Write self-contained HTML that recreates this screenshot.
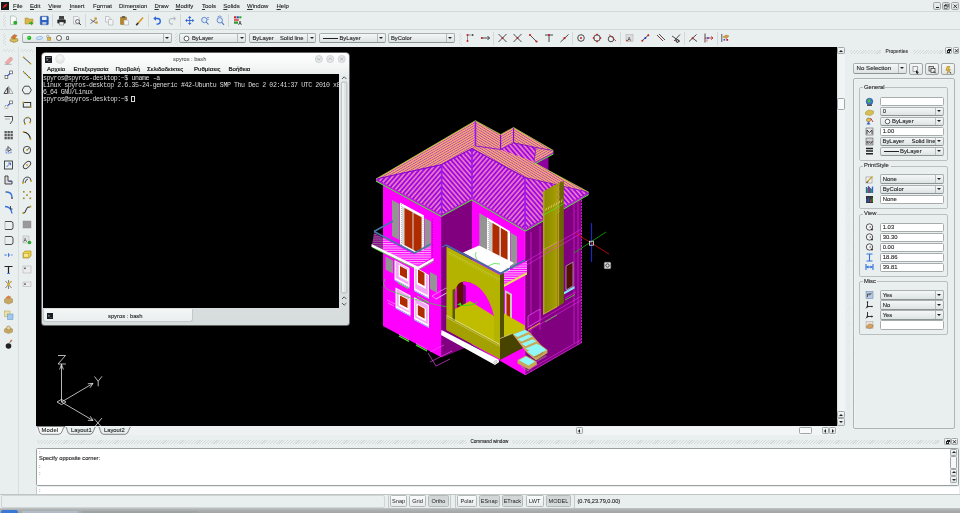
<!DOCTYPE html>
<html><head><meta charset="utf-8">
<style>
*{box-sizing:border-box;margin:0;padding:0}
html,body{width:960px;height:513px;overflow:hidden;background:#e9eeee;font-family:"Liberation Sans",sans-serif;color:#222}
.a{position:absolute}
.t{position:absolute;white-space:nowrap;font-size:6px;line-height:8px;color:#1c1c1c;-webkit-text-stroke:.12px #333}
u{text-decoration-thickness:.5px;text-underline-offset:.6px}
.mono{font-family:"Liberation Mono",monospace}
.cb .t{font-size:5.8px}
.cb{position:absolute;border:1px solid #aab0b0;border-bottom-color:#8e9494;border-radius:2px;background:linear-gradient(#f4f7f7,#dde3e3);height:10px}
.cb i{position:absolute;right:0;top:0;bottom:0;width:7.6px;border-left:.8px solid #b4baba}
.cb i:after{content:"";position:absolute;left:1.3px;top:calc(50% - 1.2px);border:2.1px solid transparent;border-top:2.8px solid #222;border-bottom:none}
.in{position:absolute;border:1px solid #a6acac;border-radius:1.5px;background:#fff;height:9.6px}
.gb{position:absolute;border:1px solid #b9bfbf;border-radius:2px}
.btn{position:absolute;border:.8px solid #a0a6a6;border-radius:1.3px;background:linear-gradient(#f6f8f8,#dfe4e4)}
.hatch{position:absolute;background:repeating-linear-gradient(135deg,#e9eeee 0 1.2px,#d3d9d9 1.2px 2px)}
</style></head><body><div id="wrap" style="position:absolute;left:0;top:0;width:960px;height:513px;will-change:transform;filter:brightness(1)">
<!-- MENUBAR -->
<div class="a" id="menubar" style="left:0;top:0;width:960px;height:12px;border-bottom:1px solid #d3d9d9">
<svg class="a" style="left:1px;top:2px" width="8" height="8" viewBox="0 0 8 8"><rect width="8" height="8" fill="#181818"/><path d="M1.5 6.5 L3 3 L6.5 1.5 L5 4.5 Z" fill="#e02020"/></svg>
<span class="t" style="left:13px;top:2px"><u>F</u>ile</span>
<span class="t" style="left:30px;top:2px"><u>E</u>dit</span>
<span class="t" style="left:48.3px;top:2px"><u>V</u>iew</span>
<span class="t" style="left:69.5px;top:2px"><u>I</u>nsert</span>
<span class="t" style="left:93px;top:2px">F<u>o</u>rmat</span>
<span class="t" style="left:119px;top:2px">Dime<u>n</u>sion</span>
<span class="t" style="left:154.5px;top:2px"><u>D</u>raw</span>
<span class="t" style="left:175.5px;top:2px"><u>M</u>odify</span>
<span class="t" style="left:202px;top:2px"><u>T</u>ools</span>
<span class="t" style="left:223.3px;top:2px"><u>S</u>olids</span>
<span class="t" style="left:247px;top:2px"><u>W</u>indow</span>
<span class="t" style="left:276.5px;top:2px"><u>H</u>elp</span>
<div class="btn" style="left:933.2px;top:1.5px;width:8.2px;height:8.2px;border-radius:1.8px;background:linear-gradient(#eaeeee,#d9dfdf)"><div class="a" style="left:1.8px;top:4px;width:3.4px;height:1.1px;background:#222"></div></div>
<div class="btn" style="left:942px;top:1.5px;width:8px;height:8.2px;border-radius:1.8px;background:linear-gradient(#dfe4e4,#d4dada)"><svg class="a" style="left:0;top:0" width="6.4" height="6.6" viewBox="0 0 6.4 6.6"><rect x="2.5" y="1.2" width="2.9" height="2.7" fill="#e4e8e8" stroke="#222" stroke-width=".5"/><rect x="1.2" y="2.6" width="2.9" height="2.7" fill="#e4e8e8" stroke="#222" stroke-width=".5"/><path d="M1.2 2.9 h2.9" stroke="#222" stroke-width=".8"/></svg></div>
<div class="btn" style="left:950.6px;top:1.5px;width:8.2px;height:8.2px;border-radius:1.8px;background:linear-gradient(#eaeeee,#d9dfdf)"><svg class="a" style="left:0;top:0" width="6.6" height="6.6" viewBox="0 0 6.6 6.6"><path d="M1.6 1.6L5 5M5 1.6L1.6 5" stroke="#222" stroke-width=".9"/></svg></div>
</div>
<!-- TOOLBAR1 -->
<div class="a" id="tb1" style="left:0;top:12px;width:960px;height:18px;border-bottom:1px solid #d3d9d9">
<div class="hatch" style="left:3px;top:3px;width:3px;height:12px"></div>
<svg class="a" style="left:0;top:0" width="260" height="18" viewBox="0 12 260 18">
<!-- new -->
<path d="M10.5 16 h4 l2 2 v6.5 h-6z" fill="#fafafa" stroke="#9aa" stroke-width=".6"/><circle cx="15.3" cy="22.8" r="2" fill="#2cae2c"/>
<!-- open -->
<path d="M25 18 h3 l1 1 h4 v5 h-8z" fill="#d9b44a" stroke="#a98a30" stroke-width=".5"/><path d="M29 22.5 h2 v-1.4 l2.2 2.2 l-2.2 2.2 v-1.4 h-2z" fill="#2cae2c"/>
<!-- save -->
<rect x="40.3" y="16.3" width="8" height="8.4" rx=".8" fill="#2a62c4" stroke="#1b4796" stroke-width=".5"/><rect x="42" y="16.8" width="4.6" height="3.2" fill="#e8eef8"/><rect x="42.3" y="22" width="4" height="2.6" fill="#b9c6dc"/>
<line x1="52.5" y1="14" x2="52.5" y2="27" stroke="#cdd3d3" stroke-width=".8"/>
<!-- print -->
<rect x="57.3" y="19.5" width="8.4" height="4" rx="1" fill="#2a2a2a"/><rect x="59" y="16" width="5" height="3.6" fill="#444"/><rect x="59.2" y="22" width="4.6" height="3" fill="#f4f4f4" stroke="#555" stroke-width=".4"/>
<!-- preview -->
<path d="M73.5 16.5 h4.5 l1.5 1.5 v6 h-6z" fill="#f2f2f2" stroke="#99a" stroke-width=".5"/><circle cx="77.5" cy="21.5" r="2" fill="#e8ecf2" stroke="#444" stroke-width=".7"/><line x1="79" y1="23" x2="80.8" y2="25" stroke="#333" stroke-width="1"/>
<line x1="85.5" y1="14" x2="85.5" y2="27" stroke="#cdd3d3" stroke-width=".8"/>
<!-- cut -->
<path d="M90.5 23.5 L97 18.5 M90.5 19.5 L96 23" stroke="#555" stroke-width=".8"/><circle cx="95.6" cy="18.6" r="1.3" fill="#c9a03a"/><circle cx="96.6" cy="22.6" r="1.3" fill="#c9a03a"/>
<!-- copy -->
<path d="M105.5 16.5 h3.5 l1 1 v4.5 h-4.5z" fill="#f4f4f4" stroke="#99a" stroke-width=".5"/><path d="M108.5 19.5 h3.5 l1 1 v4.5 h-4.5z" fill="#f4f4f4" stroke="#99a" stroke-width=".5"/>
<!-- paste -->
<rect x="120.5" y="17" width="6" height="7.5" rx=".6" fill="#b8862a" stroke="#8a6217" stroke-width=".5"/><rect x="122" y="16.2" width="3" height="1.6" fill="#555"/><path d="M124 20 h3.5 l1 1 v4 h-4.5z" fill="#f6f6f6" stroke="#99a" stroke-width=".5"/>
<!-- brush -->
<path d="M137 24.5 L143 17.5" stroke="#d89a28" stroke-width="1.6"/><path d="M136.2 25.3 L138.2 23" stroke="#333" stroke-width="1.6"/>
<line x1="148.5" y1="14" x2="148.5" y2="27" stroke="#cdd3d3" stroke-width=".8"/>
<!-- undo -->
<path d="M154.5 18.5 h3 a2.8 2.8 0 0 1 0 5.6 h-1" fill="none" stroke="#2a62d8" stroke-width="1.3"/><path d="M153.3 18.5 l2.6 -2.2 v4.4z" fill="#2a62d8"/>
<!-- redo -->
<path d="M175 18.5 h-3 a2.8 2.8 0 0 0 0 5.6 h1" fill="none" stroke="#b4bcc4" stroke-width="1.1"/><path d="M176.2 18.5 l-2.6 -2.2 v4.4z" fill="#b4bcc4"/>
<line x1="180.5" y1="14" x2="180.5" y2="27" stroke="#cdd3d3" stroke-width=".8"/>
<!-- pan -->
<path d="M189.7 17.3 v6.4 M186.5 20.5 h6.4" stroke="#2a62d8" stroke-width=".9"/><path d="M189.7 16 l1.7 1.9 h-3.4z M189.7 25 l1.7 -1.9 h-3.4z M185.2 20.5 l1.9 -1.7 v3.4z M194.2 20.5 l-1.9 -1.7 v3.4z" fill="#2a62d8"/>
<!-- zoom -->
<circle cx="204.3" cy="20" r="2.7" fill="#dfe9f6" stroke="#4a74c4" stroke-width=".8"/><line x1="206.3" y1="22" x2="208.5" y2="24.5" stroke="#4a74c4" stroke-width="1.1"/><path d="M207 17.5 h2 M207 19.3 h2" stroke="#4a74c4" stroke-width=".6"/>
<circle cx="219.8" cy="20.3" r="2.7" fill="#dfe9f6" stroke="#4a74c4" stroke-width=".8"/><line x1="221.8" y1="22.3" x2="224" y2="24.8" stroke="#4a74c4" stroke-width="1.1"/><path d="M217.5 17 a3.5 3.5 0 0 1 4 -.5" fill="none" stroke="#4a74c4" stroke-width=".7"/>
<line x1="228.5" y1="14" x2="228.5" y2="27" stroke="#cdd3d3" stroke-width=".8"/>
<!-- color grid -->
<rect x="234" y="16.3" width="2.2" height="2" fill="#d02020"/><rect x="236.6" y="16.3" width="2.2" height="2" fill="#2a4ad0"/><rect x="239.2" y="16.3" width="2.2" height="2" fill="#18b018"/><rect x="234" y="18.8" width="4.8" height="2.2" fill="#e06060"/><rect x="234" y="21.5" width="4" height="2.2" fill="#2a9a2a"/><text x="238.2" y="25" font-family="Liberation Sans" font-size="4.8" font-weight="bold" fill="#222">A</text>
</svg>
</div>
<!-- TOOLBAR2 -->
<div class="a" id="tb2" style="left:0;top:30px;width:960px;height:17px">
<div class="hatch" style="left:3px;top:3px;width:3px;height:12px"></div>
<svg class="a" style="left:9px;top:3px" width="10" height="10" viewBox="0 0 10 10"><path d="M1 6.5 l3.5 -2 l4.5 1.5 v2 l-4 1.5 l-4 -1.5z" fill="#c8a840" stroke="#8a7020" stroke-width=".4"/><path d="M2 4.5 l3 -3 l3 1 l-2.5 3z" fill="#d87838" stroke="#8a4a20" stroke-width=".4"/><path d="M1.5 6.8 l3.5 1 l3.8 -1.2" fill="none" stroke="#f0e0a0" stroke-width=".5"/></svg>
<div class="cb" style="left:21.5px;top:3px;width:150px">
 <svg class="a" style="left:0;top:0" width="60" height="8" viewBox="0 0 60 8"><circle cx="6.2" cy="3.9" r="2.1" fill="#1eb81e"/><circle cx="5.8" cy="3.4" r=".8" fill="#70e070"/><ellipse cx="16.5" cy="4" rx="3.3" ry="1.5" fill="#d4e6fa" stroke="#6aa0e0" stroke-width=".6" transform="rotate(-12 16.5 4)"/><rect x="24.6" y="3.4" width="3.2" height="2.8" fill="#e0b838" stroke="#8a6a18" stroke-width=".4"/><path d="M23.6 3.4 v-1 a1.2 1.2 0 0 1 2.4 0 v1" fill="none" stroke="#777" stroke-width=".6"/><circle cx="36" cy="4" r="2.5" fill="#fff" stroke="#222" stroke-width=".7"/></svg>
 <span class="t" style="left:43.5px;top:0px">0</span><i></i></div>
<div class="hatch" style="left:174.5px;top:3px;width:3px;height:12px"></div>
<div class="cb" style="left:179px;top:3px;width:67px"><svg class="a" style="left:3px;top:0.5px" width="7" height="7" viewBox="0 0 7 7"><circle cx="3.5" cy="3.5" r="2.4" fill="#fff" stroke="#222" stroke-width=".7"/></svg><span class="t" style="left:12px;top:0">ByLayer</span><i></i></div>
<div class="cb" style="left:249px;top:3px;width:67px"><span class="t" style="left:2.5px;top:0">ByLayer</span><span class="t" style="left:30px;top:0">Solid line</span><i></i></div>
<div class="cb" style="left:318.5px;top:3px;width:67px"><div class="a" style="left:3px;top:3.8px;width:15px;height:0.8px;background:#222"></div><span class="t" style="left:20px;top:0">ByLayer</span><i></i></div>
<div class="cb" style="left:387.5px;top:3px;width:67px"><span class="t" style="left:2.5px;top:0">ByColor</span><i></i></div>
<div class="hatch" style="left:459px;top:3px;width:3px;height:12px"></div>
<svg class="a" style="left:0;top:0" width="960" height="17" viewBox="0 30 960 17">
<g stroke="#222" stroke-width=".8" fill="none">
<!-- snap icon -->
<path d="M467.5 35 v6 M467.5 35 h5" stroke="#555" stroke-width=".6"/><circle cx="467.5" cy="35" r="1" fill="#c02020" stroke="none"/><circle cx="467.5" cy="41" r="1" fill="#c02020" stroke="none"/><rect x="472" y="34.3" width="1.4" height="1.4" fill="#222" stroke="none"/>
<!-- arrow -->
<path d="M481.5 38 h8 M487.5 36 l2 2 l-2 2" /><circle cx="481.8" cy="38" r="1" fill="#c02020" stroke="none"/>
<line x1="493.5" y1="32" x2="493.5" y2="45" stroke="#cdd3d3"/>
<!-- X intersections -->
<path d="M498.5 34 L506.5 42 M506.5 34 L498.5 42"/><circle cx="502.5" cy="38" r="1" fill="#c02020" stroke="none"/>
<path d="M513.5 34 L521.5 42 M521.5 34 L513.5 42"/><circle cx="517.5" cy="38" r="1" fill="#c02020" stroke="none"/>
<path d="M530 35 L536.5 41.5"/><circle cx="530" cy="35" r="1.1" fill="#c02020" stroke="none"/><circle cx="536.5" cy="41.5" r="1.1" fill="#c02020" stroke="none"/>
<path d="M545 35 h8 M549 35 v7"/><circle cx="549" cy="35" r="1" fill="#c02020" stroke="none"/>
<path d="M560.5 42 L568.5 34.5"/><circle cx="564.5" cy="38.2" r="1.1" fill="#c02020" stroke="none"/>
<line x1="572.5" y1="32" x2="572.5" y2="45" stroke="#cdd3d3"/>
<circle cx="581" cy="38" r="3.3"/><circle cx="581" cy="38" r="1" fill="#c02020" stroke="none"/>
<circle cx="597" cy="38" r="3.2"/><g fill="#c02020" stroke="none"><rect x="596.2" y="33.8" width="1.6" height="1.6"/><rect x="596.2" y="40.6" width="1.6" height="1.6"/><rect x="592.8" y="37.2" width="1.6" height="1.6"/><rect x="599.6" y="37.2" width="1.6" height="1.6"/></g>
<circle cx="611" cy="39" r="2.8"/><path d="M609 34.5 L616 41" stroke="#c02020"/>
<line x1="620.5" y1="32" x2="620.5" y2="45" stroke="#cdd3d3"/>
<rect x="626" y="34.5" width="7" height="7" fill="#dcdcdc" stroke="#aaa" stroke-width=".5"/><text x="627.5" y="40.5" font-family="Liberation Sans" font-size="5" fill="#222" stroke="none">A</text><circle cx="627" cy="40.5" r=".8" fill="#c02020" stroke="none"/>
<path d="M642 41 L648.5 35"/><circle cx="642.3" cy="40.8" r="1" fill="#c02020" stroke="none"/><circle cx="648.3" cy="35.2" r="1" fill="#c02020" stroke="none"/><circle cx="645.3" cy="38" r="1" fill="#2030d0" stroke="none"/>
<path d="M657 35 L663 41 M659 34 L665 40"/><path d="M657.6 35.6 L663 41" stroke="#c02020" stroke-width=".5"/>
<path d="M672 36 L680 41.5 M674 41 L680 34.5"/><path d="M675 40 l3 2.5" stroke="#c02020"/><circle cx="677.5" cy="41" r="1.4"/>
<line x1="684.5" y1="32" x2="684.5" y2="45" stroke="#cdd3d3"/>
<path d="M689 41.5 L696.5 34.5 M692.5 38 L697 41.5"/><circle cx="692.5" cy="38.3" r="1" fill="#c02020" stroke="none"/>
<path d="M705 33.5 v9"/><path d="M705 38 h8 M711 36.3 l2 1.7 l-2 1.7" stroke="#c02020"/><circle cx="708" cy="38" r="1" fill="#3050e0" stroke="none"/><circle cx="706.8" cy="40.5" r="1.2" fill="#f0a0a0" stroke="none"/>
<line x1="717.5" y1="32" x2="717.5" y2="45" stroke="#cdd3d3"/>
<path d="M721.8 34 v8" stroke="#333"/><path d="M723 37 l3 -2 l3 1 l-2.5 2.5z" fill="#d8a040" stroke="#8a6020" stroke-width=".4"/><rect x="723.5" y="39" width="1.6" height="1.6" fill="#3050e0" stroke="none"/><rect x="726.3" y="39" width="1.8" height="1.8" fill="#d02020" stroke="none"/>
</g></svg>
</div>
<!-- CANVAS -->
<div class="a" id="canvas" style="left:36px;top:47px;width:801px;height:379px;background:#000"></div>
<!-- HOUSE -->
<!--HS--><svg class="a" id="house" style="left:36px;top:47px" width="801" height="379" viewBox="36 47 801 379">
<defs shape-rendering="crispEdges">
<pattern id="fa" width="20" height="2.1" patternUnits="userSpaceOnUse" patternTransform="rotate(-30.4)"><rect width="20" height="2.1" fill="#c432da"/><rect width="20" height="1.05" fill="#ecb060"/></pattern>
<pattern id="fb" width="20" height="2.1" patternUnits="userSpaceOnUse" patternTransform="rotate(32.2)"><rect width="20" height="2.1" fill="#c432da"/><rect width="20" height="1.05" fill="#ecb060"/></pattern>
<pattern id="dl" width="3.5" height="20" patternUnits="userSpaceOnUse" patternTransform="rotate(-41)"><rect width="3.5" height="20" fill="#ea74c0"/><rect width="1.5" height="20" fill="#9c08e6"/></pattern>
<pattern id="dr" width="3.5" height="20" patternUnits="userSpaceOnUse" patternTransform="rotate(41)"><rect width="3.5" height="20" fill="#ea74c0"/><rect width="1.5" height="20" fill="#9c08e6"/></pattern>
<pattern id="pk" width="20" height="1.8" patternUnits="userSpaceOnUse"><rect width="20" height="1.8" fill="#ff00ff"/><rect width="20" height=".8" fill="#ffb0ff"/></pattern>
<linearGradient id="chim" x1="0" x2="1"><stop offset="0" stop-color="#b0ac18"/><stop offset=".18" stop-color="#8e8a00"/><stop offset=".7" stop-color="#9c9800"/><stop offset="1" stop-color="#a8a400"/></linearGradient>
</defs>
<polygon points="383,182 441.6,214 441.6,357.5 383,326" fill="#ff00ff"/>
<polygon points="441.6,214 472,197 472,345 441.6,357.5" fill="#800080"/>
<polygon points="472,197 525,229 525,375 472,345" fill="#ff00ff"/>
<polygon points="525,229 581.5,196 581.5,342.6 525,375" fill="#800080"/>
<polygon points="534,160 548.5,152 548.5,172 534,180" fill="#9000a0"/>
<polygon points="577,190 581.5,187.5 581.5,200 577,200" fill="#800080"/>
<polygon points="376,179 475.4,120.7 475.5,146 472,148.4 441.7,164.6" fill="url(#fa)"/>
<polygon points="376,179 441.7,164.6 441.6,214.5" fill="url(#dr)"/>
<polygon points="441.7,164.6 472,148.4 472,198 441.6,214.5" fill="url(#dl)"/>
<polygon points="472,148.4 525,177.5 525,229 472,198" fill="url(#dr)"/>
<polygon points="525,177.5 588.7,192.2 525,229" fill="url(#dl)"/>
<polygon points="475.4,120.7 500.6,134.4 500.6,149 513.5,143 536,148 534,162.6 588.7,192.2 525,177.5 472,148.4 475.5,146" fill="url(#fb)"/>
<polygon points="500.6,134.4 513.5,127.5 513.5,143 500.6,149.5" fill="url(#fa)"/>
<polygon points="513.5,127.5 553.3,150.5 536,147.5 513.5,142.5" fill="url(#fb)"/>
<polygon points="500.6,149.5 513.5,142.8 536,147.5 534,162.6 528,159.5" fill="url(#dl)"/>
<polygon points="536,147.5 553.3,150.5 553.3,153 534,162.6" fill="url(#fa)"/>
<line x1="475.4" y1="120.7" x2="475.5" y2="146" stroke="#9a18ee" stroke-width="1.6"/>
<line x1="472" y1="148.4" x2="472" y2="198" stroke="#9a18ee" stroke-width="1.6"/>
<line x1="441.7" y1="164.6" x2="441.6" y2="214.5" stroke="#9a18ee" stroke-width="1.6"/>
<line x1="525" y1="177.5" x2="525" y2="229" stroke="#9a18ee" stroke-width="1.6"/>
<line x1="376" y1="179" x2="441.7" y2="164.6" stroke="#8a08d8" stroke-width="1.1"/>
<line x1="441.7" y1="164.6" x2="472" y2="148.4" stroke="#8a08d8" stroke-width="1.1"/>
<line x1="472" y1="148.4" x2="525" y2="177.5" stroke="#8a08d8" stroke-width="1.1"/>
<line x1="525" y1="177.5" x2="588.7" y2="192.2" stroke="#8a08d8" stroke-width="0.8"/>
<line x1="500.6" y1="134.4" x2="500.6" y2="149.5" stroke="#8a08d8" stroke-width="1.2"/>
<line x1="513.5" y1="127.5" x2="513.5" y2="143" stroke="#8a08d8" stroke-width="1.2"/>
<line x1="475.5" y1="146" x2="500.6" y2="149.5" stroke="#8a08d8" stroke-width="0.9"/>
<line x1="500.6" y1="149.5" x2="513.5" y2="143" stroke="#8a08d8" stroke-width="0.8"/>
<line x1="513.5" y1="143" x2="536" y2="147.5" stroke="#8a08d8" stroke-width="0.8"/>
<line x1="536" y1="147.5" x2="553.3" y2="150.5" stroke="#8a08d8" stroke-width="0.7"/>
<line x1="536" y1="147.5" x2="534" y2="162.6" stroke="#8a08d8" stroke-width="0.7"/>
<polygon points="376,179 441.6,214.5 441.6,216.7 376,181.2" fill="#c020e0"/>
<line x1="376" y1="181.2" x2="441.6" y2="216.7" stroke="#48f028" stroke-width="1.0"/>
<polygon points="441.6,214.5 472,198 472,199.8 441.6,216.3" fill="#c020e0"/>
<line x1="441.6" y1="216.3" x2="472" y2="199.8" stroke="#48f028" stroke-width="1.0"/>
<polygon points="472,198 525,229 525,231.0 472,200.0" fill="#c020e0"/>
<line x1="472" y1="200.0" x2="525" y2="231.0" stroke="#48f028" stroke-width="1.0"/>
<polygon points="525,229 588.7,192.2 588.7,194.6 525,231.4" fill="#c020e0"/>
<line x1="525" y1="231.4" x2="588.7" y2="194.6" stroke="#48f028" stroke-width="1.0"/>
<polygon points="534,162.6 553.3,152.5 553.3,154.1 534,164.2" fill="#c020e0"/>
<line x1="534" y1="164.2" x2="553.3" y2="154.1" stroke="#48f028" stroke-width="1.0"/>
<line x1="376" y1="179" x2="475.4" y2="120.7" stroke="#b8e040" stroke-width="0.7"/>
<line x1="475.4" y1="120.7" x2="500.6" y2="134.4" stroke="#b8e040" stroke-width="0.7"/>
<line x1="513.5" y1="127.5" x2="553.3" y2="150.5" stroke="#b8e040" stroke-width="0.7"/>
<line x1="534" y1="162.6" x2="588.7" y2="192.2" stroke="#b8e040" stroke-width="0.7"/>
<line x1="500.6" y1="134.4" x2="513.5" y2="127.5" stroke="#c8c040" stroke-width="0.6"/>
<polygon points="543,191.5 557.5,183.5 557.5,306.5 543,314.5" fill="url(#chim)"/>
<polygon points="557.5,183.5 559.5,182.5 559.5,305.5 557.5,306.5" fill="#aca800"/>
<polygon points="559.5,182.5 563.8,181 563.8,303 559.5,305.5" fill="#6c6800"/>
<line x1="545.5" y1="211.0" x2="546.7" y2="207.8" stroke="#d8d860" stroke-width="0.8"/>
<line x1="548.1" y1="209.6" x2="549.3000000000001" y2="206.4" stroke="#d8d860" stroke-width="0.8"/>
<line x1="550.7" y1="208.2" x2="551.9000000000001" y2="205.0" stroke="#d8d860" stroke-width="0.8"/>
<line x1="553.3" y1="206.8" x2="554.5" y2="203.60000000000002" stroke="#d8d860" stroke-width="0.8"/>
<line x1="555.9" y1="205.4" x2="557.1" y2="202.20000000000002" stroke="#d8d860" stroke-width="0.8"/>
<line x1="558.5" y1="204.0" x2="559.7" y2="200.8" stroke="#d8d860" stroke-width="0.8"/>
<line x1="561.1" y1="202.6" x2="562.3000000000001" y2="199.4" stroke="#d8d860" stroke-width="0.8"/>
<line x1="543" y1="215.5" x2="563.8" y2="203.5" stroke="#48f028" stroke-width="0.7"/>
<line x1="543" y1="250" x2="557.5" y2="242" stroke="#d0cc20" stroke-width="0.6"/>
<line x1="543" y1="314.5" x2="557.5" y2="306.5" stroke="#d8d440" stroke-width="0.7"/>
<line x1="525" y1="262" x2="581.5" y2="229" stroke="#ff30ff" stroke-width="0.5"/>
<line x1="525" y1="266" x2="581.5" y2="233" stroke="#ff30ff" stroke-width="0.5"/>
<line x1="525" y1="329" x2="581.5" y2="296" stroke="#ff30ff" stroke-width="0.5"/>
<line x1="525" y1="333" x2="581.5" y2="300" stroke="#ff30ff" stroke-width="0.5"/>
<line x1="525" y1="372" x2="581.5" y2="339.5" stroke="#ff30ff" stroke-width="0.5"/>
<line x1="574" y1="201" x2="574" y2="343" stroke="#ff30ff" stroke-width="0.5"/>
<line x1="578" y1="199" x2="578" y2="345" stroke="#ff30ff" stroke-width="0.5"/>
<line x1="531" y1="232" x2="531" y2="372" stroke="#ff30ff" stroke-width="0.5"/>
<line x1="540" y1="226" x2="540" y2="330" stroke="#ff30ff" stroke-width="0.5"/>
<line x1="581.5" y1="197" x2="581.5" y2="343" stroke="#ff30ff" stroke-width=".7" stroke-dasharray="2 1"/>
<line x1="525" y1="231" x2="525" y2="375" stroke="#ff30ff" stroke-width=".6"/>
<line x1="525" y1="375" x2="581.5" y2="342.6" stroke="#ff30ff" stroke-width="0.7"/>
<polygon points="566,266 573,262 573,286 566,290" fill="#501008" stroke="#b0a0b0" stroke-width=".8"/>
<polygon points="564,292 574.5,286 574.5,288.5 564,294.5" fill="#80e8f8"/>
<line x1="565" y1="300" x2="575" y2="294.5" stroke="#48f028" stroke-width="0.7"/>
<line x1="565" y1="298" x2="576" y2="292" stroke="#ff30ff" stroke-width="0.5"/>
<polygon points="528,316 540,309 540,320 528,327" fill="#980098" stroke="#ff60ff" stroke-width=".6"/>
<line x1="528" y1="330" x2="540" y2="323" stroke="#e8d020" stroke-width="0.9"/>
<line x1="545" y1="322" x2="557" y2="315" stroke="#48f028" stroke-width="0.7"/>
<polygon points="392,200 399.5,204.05 399.5,240.05 392,236" fill="#949494"/>
<polygon points="400,202.5 424,215.46 424,257.46000000000004 400,244.5" fill="#ffffff"/>
<polygon points="402,206 422,216.8 422,254.8 402,244" fill="#d8d8d8"/>
<polygon points="404.5,208 412.5,212.32 412.5,249.32 404.5,245" fill="#b02c00"/>
<polygon points="413.5,213 421.5,217.32 421.5,254.32 413.5,250" fill="#b02c00"/>
<polygon points="424.5,218 431.0,221.51 431.0,253.51 424.5,250" fill="#949494"/>
<line x1="401.5" y1="204" x2="401.5" y2="245" stroke="#a8a8a8" stroke-width=".8" stroke-dasharray="1 1"/>
<line x1="423" y1="216" x2="423" y2="257" stroke="#b0b0b0" stroke-width=".8" stroke-dasharray="1 1"/>
<line x1="432.5" y1="219" x2="432.5" y2="262" stroke="#a000a0" stroke-width=".6" stroke-dasharray="1.5 1"/>
<polygon points="383,237.8 414,254.5 431,245.5 431,258 418,266 383,249.6" fill="url(#pk)" opacity=".95"/>
<polygon points="374,233 383,237.8 383,249.6 372,244.5" fill="url(#pk)" opacity=".55"/>
<polygon points="371.5,244 418,266.5 433.5,258 433.5,260.5 418,269.5 371.5,247" fill="#ffffff"/>
<line x1="373.5" y1="248" x2="418" y2="270" stroke="#48f028" stroke-width="0.7"/>
<line x1="418" y1="270" x2="433.5" y2="261.5" stroke="#48f028" stroke-width="0.7"/>
<polyline points="374,231.5 414.5,253 431,244" fill="none" stroke="#4878a8" stroke-width="1.8"/>
<line x1="374" y1="231.5" x2="393" y2="221" stroke="#4878a8" stroke-width="1.5"/>
<polygon points="385.5,256.5 393.0,260.55 393.0,273.55 385.5,269.5" fill="#949494"/>
<polygon points="430,272 437,275.78 437,292.78 430,289" fill="#949494"/>
<polygon points="394.5,260 409.5,268.1 409.5,287.6 394.5,279.5" fill="#ffffff"/>
<polygon points="395.7,261.6 408.3,268.404 408.3,284.704 395.7,277.90000000000003" fill="#f4a8f4"/>
<polygon points="398.7,264.5 408.3,269.684 408.3,281.684 398.7,276.5" fill="#ffffff"/>
<polygon points="400,266 407,269.78 407,278.78 400,275" fill="#b02c00"/>
<line x1="394.5" y1="280.1" x2="409.5" y2="288.20000000000005" stroke="#80e8f8" stroke-width="0.9"/>
<polygon points="414,267 429,275.1 429,298.1 414,290" fill="#ffffff"/>
<polygon points="415.2,268.6 427.8,275.404 427.8,295.204 415.2,288.40000000000003" fill="#f4a8f4"/>
<polygon points="416.7,268.0 425.8,272.914 425.8,288.914 416.7,284.0" fill="#ffffff"/>
<polygon points="418,269.5 424.5,273.01 424.5,286.01 418,282.5" fill="#b02c00"/>
<line x1="414" y1="290.6" x2="429" y2="298.70000000000005" stroke="#80e8f8" stroke-width="0.9"/>
<polygon points="395.5,287.5 410.5,295.6 410.5,315.6 395.5,307.5" fill="#ffffff"/>
<polygon points="396.7,289.1 409.3,295.904 409.3,312.704 396.7,305.90000000000003" fill="#f4a8f4"/>
<polygon points="398.7,294.0 408.8,299.454 408.8,310.954 398.7,305.5" fill="#ffffff"/>
<polygon points="400,295.5 407.5,299.55 407.5,308.05 400,304.0" fill="#b02c00"/>
<line x1="395.5" y1="308.1" x2="410.5" y2="316.20000000000005" stroke="#80e8f8" stroke-width="0.9"/>
<polygon points="414,297 429,305.1 429,327.1 414,319" fill="#ffffff"/>
<polygon points="415.2,298.6 427.8,305.404 427.8,324.204 415.2,317.40000000000003" fill="#f4a8f4"/>
<polygon points="416.5,303.5 425.9,308.576 425.9,321.576 416.5,316.5" fill="#ffffff"/>
<polygon points="417.8,305 424.6,308.672 424.6,318.672 417.8,315" fill="#b02c00"/>
<line x1="414" y1="319.6" x2="429" y2="327.70000000000005" stroke="#80e8f8" stroke-width="0.9"/>
<path d="M385 279 q-5 8 6 12 q20 8 38 12 q22 6 22 2" fill="none" stroke="#30e030" stroke-width=".7"/>
<line x1="398" y1="283" x2="408" y2="288.5" stroke="#48f028" stroke-width="1"/>
<line x1="417" y1="296" x2="429" y2="302.5" stroke="#48f028" stroke-width="1"/>
<line x1="399" y1="336" x2="409" y2="341.5" stroke="#48f028" stroke-width="1.2"/>
<line x1="416" y1="345" x2="427" y2="351" stroke="#48f028" stroke-width="1.2"/>
<line x1="399" y1="334.5" x2="409" y2="340" stroke="#ffb0ff" stroke-width="0.6"/>
<line x1="416" y1="343.5" x2="427" y2="349.5" stroke="#ffb0ff" stroke-width="0.6"/>
<path d="M387 300 l8 4 M388 303 l6 3" stroke="#ffb0ff" stroke-width=".6"/>
<path d="M430 352 l14 -7 M430 362 l22 -11 M436 366 l14 -7 M428 353 l8 13" stroke="#ff50ff" stroke-width=".6" fill="none"/>
<path d="M432 296 l14 -8 l4 3 l-14 8z M436 299 l14 -8" stroke="#f0c0f0" stroke-width=".6" fill="none"/>
<polygon points="479.3,213 487.0,217.62 487.0,255.62 479.3,251" fill="#949494"/>
<polygon points="487,217.5 510,231.3 510,276.3 487,262.5" fill="#ffffff"/>
<polygon points="489,221 508,232.4 508,274.4 489,263" fill="#c8c8c8"/>
<polygon points="492.5,223 499.3,227.08 499.3,264.08000000000004 492.5,260" fill="#b02c00"/>
<polygon points="501,228 507.4,231.84 507.4,268.84000000000003 501,265" fill="#b02c00"/>
<line x1="508.5" y1="231" x2="508.5" y2="268" stroke="#ffffff" stroke-width="1.2" stroke-dasharray="1 1"/>
<line x1="488.3" y1="219" x2="488.3" y2="258" stroke="#a0a0a0" stroke-width=".8" stroke-dasharray="1 1"/>
<polygon points="510.5,232.5 517.0,236.4 517.0,270.4 510.5,266.5" fill="#949494"/>
<polygon points="463,252.5 479,245.5 514,263 501,272.8" fill="#ffffff"/>
<path d="M476 252 q-3 8 8 12 M488 266 q6 -4 12 -2" fill="none" stroke="#30e030" stroke-width=".7"/>
<polygon points="503,274 527,261 527,272 503,285" fill="url(#pk)"/>
<polygon points="503,285 527,272 527,274.5 503,287.5" fill="#e8e060"/>
<polygon points="505,290 512,294 512,338 505,334" fill="#c8c8c8"/>
<polygon points="506.5,293 510,295 510,335 506.5,333" fill="#b02c00"/>
<polygon points="504,313.5 525,325.5 525,329.5 503,342" fill="#c4c000"/>
<path d="M455 322 L455 293 Q456 281 465 281.5 Q486 284 494 316 L494 343 Z" fill="#ff00ff"/>
<polygon points="457,284 463,281.5 463,312 457,309" fill="#601000"/>
<polygon points="463,284 466,286 466,312 463,312" fill="#800080"/>
<polygon points="455,309 470,301 494,316 494,343 455,322" fill="#c0bc00"/>
<path d="M457 304.5 l4 -2 v3.5z" fill="#20e020"/><path d="M460 305 q10 2 18 -3" fill="none" stroke="#20e020" stroke-width=".8"/>
<path d="M446.5 246.5 L500 275 L500 359 L446.5 330 Z M455 322 L455 293 Q456 281 465 281.5 Q486 284 494 316 L494 343 Z" fill="#b4b400" fill-rule="evenodd"/>
<polygon points="452.5,290 455,288.5 455,322 452.5,320.5" fill="#585800"/>
<polygon points="446.5,316 500,345 500,359 446.5,330" fill="#a4a000"/>
<line x1="446.5" y1="315.5" x2="500" y2="344.5" stroke="#e8e8c0" stroke-width="0.7"/>
<line x1="446.5" y1="317.5" x2="500" y2="346.5" stroke="#d8d890" stroke-width="0.5"/>
<line x1="449" y1="254" x2="499" y2="281" stroke="#d8d880" stroke-width=".6" stroke-dasharray="1 2"/>
<line x1="448.5" y1="252" x2="500" y2="279.5" stroke="#d0d060" stroke-width="0.5"/>
<polygon points="500,275 504,273 504,337 500,338.5" fill="#505000"/>
<polygon points="500,338.5 512.5,333.5 523,348 500,360" fill="#484400"/>
<line x1="500" y1="338.5" x2="512.5" y2="333.5" stroke="#e0e0b0" stroke-width="0.6"/>
<polyline points="446,245 500.5,273.5 525,260" fill="none" stroke="#4070a8" stroke-width="1.7"/>
<line x1="446" y1="245" x2="441.6" y2="247.3" stroke="#4070a8" stroke-width="1.2"/>
<polygon points="441.5,330 498.5,359.5 499.2,362 495,365 441,335" fill="#ffffff"/>
<rect x="493.8" y="361" width="3.4" height="2" rx=".8" fill="none" stroke="#888" stroke-width=".5" transform="rotate(-28 495.5 362)"/>
<polygon points="512.5,334 524.6,329.3 529.5,332 541,345 547.5,350 547.5,353 536,360.5 527,353" fill="#c8a858"/>
<polygon points="513.4,334.6 524.6,330.0 528.5,332.0 517.6,337.0" fill="#90f8f8"/>
<polygon points="517.4,339.20000000000005 528.6,334.6 532.5,336.6 521.6,341.6" fill="#90f8f8"/>
<polygon points="521.4,343.8 532.6,339.2 536.5,341.2 525.6,346.2" fill="#90f8f8"/>
<polygon points="525.4,348.40000000000003 536.6,343.8 540.5,345.8 529.6,350.8" fill="#90f8f8"/>
<polygon points="527,351.5 540,345.3 546.6,350 534,356.6" fill="#90f8f8"/>
<polygon points="517.5,360 526,355.5 536.5,361.5 537,364.5 529,369.5 517.5,363.5" fill="#c8a858"/>
<polygon points="519,360.2 526,356.6 535,361.6 528.5,365.6" fill="#90f8f8"/>
<path d="M534 357 q6 -1 9 -5" fill="none" stroke="#a08040" stroke-width="1.2"/>
<line x1="521" y1="366.5" x2="529" y2="371" stroke="#48f028" stroke-width="0.6"/>
<line x1="536" y1="362" x2="547" y2="356" stroke="#ff50ff" stroke-width="0.5"/>
<line x1="538" y1="360" x2="546" y2="355.5" stroke="#48f028" stroke-width="0.5"/>
<line x1="591.6" y1="223" x2="591.6" y2="262" stroke="#2030ff" stroke-width="0.9"/>
<line x1="575" y1="233" x2="609" y2="254" stroke="#d01010" stroke-width="0.8"/>
<line x1="574" y1="253" x2="606" y2="232" stroke="#10b010" stroke-width="0.8"/>
<rect x="589.6" y="241.2" width="4" height="4" fill="none" stroke="#fff" stroke-width=".7"/>
<rect x="604.3" y="262.3" width="6.4" height="6.4" rx="1" fill="#ddd" stroke="#888" stroke-width=".5"/><circle cx="607.5" cy="265.5" r="1.7" fill="none" stroke="#222" stroke-width=".8"/>
<g stroke="#f0f0f0" stroke-width=".75" fill="none"><path d="M61.5 402 V364.5 M59.6 369.5 L61.5 364.5 L63.4 369.5 M61.5 402 L93 383.4 M87.8 383.8 L93 383.4 L90 387.8 M61.5 402 L93 420.5 M90.2 416.2 L93 420.5 L87.9 420.3"/><path d="M57 402 l4.5 -2.6 l4.5 2.6 l-4.5 2.6z"/><path d="M58 355.5 h7.5 l-7.5 8.5 h7.8"/><path d="M94.5 376.5 l3.7 4.8 l3.8 -5 M98.2 381.3 v5"/><path d="M94 418.5 l8 9 M102 418 l-8 9.5"/></g>
</svg><!--HE-->
<!-- TERMINAL -->
<div class="a" id="term" style="left:42px;top:53px;width:307px;height:272px;border-radius:3px 3px 2px 2px;background:linear-gradient(#ffffff 0px,#f4f6f6 14px,#e6eaea 24px,#dfe4e4 200px,#d6dcdc 100%);box-shadow:0 0 0 .5px #c8cccc">
 <div class="a" style="left:3px;top:2.5px;width:7px;height:7px;background:#1a1a22;border-radius:.5px"><div class="a" style="left:1px;top:1px;width:5px;height:1px;background:#777"></div><span class="a mono" style="left:1.2px;top:2px;font-size:3.5px;line-height:4px;color:#fff">&gt;_</span></div>
 <div class="a" style="left:14px;top:1.5px;width:8px;height:8px;border-radius:50%;background:radial-gradient(circle at 50% 35%,#fafafa,#d8dcdc);box-shadow:0 0 0 .5px #c4c8c8"></div>
 <span class="t" style="left:131px;top:1.7px;color:#8a8e8e;font-size:5.6px">spyros : bash</span>
 <svg class="a" style="left:272px;top:0.5px" width="34" height="10" viewBox="0 0 34 10"><g fill="#e4e8e8" stroke="#c0c4c4" stroke-width=".6"><circle cx="4.9" cy="5" r="3.6"/><circle cx="16.2" cy="5" r="3.6"/><circle cx="27.7" cy="5" r="3.6"/></g><g fill="none" stroke="#a4a8a8" stroke-width=".8"><path d="M3.2 4.3 l1.7 1.6 l1.7 -1.6"/><path d="M14.5 5.7 l1.7 -1.6 l1.7 1.6"/><path d="M26.2 3.5 l3 3 M29.2 3.5 l-3 3"/></g></svg>
 <span class="t" style="left:5px;top:11.6px;font-size:6.1px;color:#111;-webkit-text-stroke:.22px #222">Αρχείο</span>
 <span class="t" style="left:31.5px;top:11.6px;font-size:6.1px;color:#111;-webkit-text-stroke:.22px #222">Επεξεργασία</span>
 <span class="t" style="left:73.5px;top:11.6px;font-size:6.1px;color:#111;-webkit-text-stroke:.22px #222">Προβολή</span>
 <span class="t" style="left:105px;top:11.6px;font-size:6.1px;color:#111;-webkit-text-stroke:.22px #222">Σελιδοδείκτες</span>
 <span class="t" style="left:152px;top:11.6px;font-size:6.1px;color:#111;-webkit-text-stroke:.22px #222">Ρυθμίσεις</span>
 <span class="t" style="left:186.5px;top:11.6px;font-size:6.1px;color:#111;-webkit-text-stroke:.22px #222">Βοήθεια</span>
 <div class="a mono" style="left:1px;top:21px;width:296.3px;height:233.8px;background:#000;color:#dadada;font-size:6.6px;letter-spacing:-0.42px;line-height:6.9px;white-space:pre;overflow:hidden;padding-top:1.9px">spyros@spyros-desktop:~$ uname -a
Linux spyros-desktop 2.6.35-24-generic #42-Ubuntu SMP Thu Dec 2 02:41:37 UTC 2010 x8
6_64 GNU/Linux
spyros@spyros-desktop:~$<div class="a" style="left:87.6px;top:21.6px;width:4px;height:6.2px;border:.6px solid #d8d8d8"></div></div>
 <!-- scrollbar -->
 <svg class="a" style="left:297.5px;top:21px" width="8" height="235" viewBox="0 0 8 235"><path d="M2 5 l2.2 -2.2 l2.2 2.2" fill="none" stroke="#333" stroke-width=".8"/><rect x="1.3" y="8" width="5.6" height="211" rx="1.5" fill="#dfe4e4" stroke="#9aa0a0" stroke-width=".6"/><rect x="2.2" y="9" width="1.5" height="209" fill="#f4f6f6"/><path d="M2 225 l2.2 -2.2 l2.2 2.2 M2 229 l2.2 2.2 l2.2 -2.2" fill="none" stroke="#333" stroke-width=".8"/></svg>
 <!-- tab bar -->
 <div class="a" style="left:1px;top:255.5px;width:150px;height:13.5px;background:linear-gradient(#f4f6f6,#eaeeee);border:0.6px solid #c4c8c8;border-top:none;border-radius:0 0 3px 3px"></div>
 <div class="a" style="left:5px;top:259.5px;width:6px;height:6px;background:#1a1a22"><span class="a mono" style="left:.8px;top:1px;font-size:3.2px;line-height:4px;color:#fff">&gt;_</span></div>
 <span class="t" style="left:66px;top:259px;font-size:5.8px">spyros : bash</span>
</div>

<!-- LEFT TOOLBARS -->
<div class="a" id="lefttb" style="left:0;top:47px;width:36px;height:447px">
<div class="a" style="left:17.5px;top:0;width:1px;height:447px;background:#d8dede"></div>
<div class="hatch" style="left:3px;top:2px;width:12px;height:3px"></div>
<div class="hatch" style="left:21px;top:2px;width:12px;height:3px"></div>
<svg class="a" style="left:0;top:0" width="36" height="320" viewBox="0 47 36 320">
<g fill="none" stroke="#222" stroke-width=".8">
<!-- col1 -->
<path d="M5.2 62.5 l4.6 -5 q1.3 -.6 2.2 .4 q.8 1 .2 2 l-4.4 4.6z" fill="#f2a8a8" stroke="#d08080" stroke-width=".4"/><path d="M4.5 64.3 h7" stroke="#999" stroke-width=".7"/>
<rect x="5" y="75.5" width="2.8" height="2.8" fill="#fff" stroke="#333" stroke-width=".6"/><rect x="9.7" y="71" width="2.8" height="2.8" fill="#fff" stroke="#333" stroke-width=".6"/><path d="M7.6 75.6 l2.4 -2" stroke="#2040e0" stroke-width="1.1"/>
<path d="M8.5 86 v8" stroke="#888"/><path d="M7.5 87.5 v6 h-3.5z" /><path d="M9.5 87.5 v6 h3.5z" stroke="#999"/>
<rect x="5" y="105.5" width="2.8" height="2.8" fill="#fff" stroke="#555" stroke-width=".6" stroke-dasharray="1 .6"/><rect x="9.7" y="101" width="2.8" height="2.8" fill="#fff" stroke="#333" stroke-width=".6"/><path d="M7.6 105.6 l2.4 -2" stroke="#2040e0" stroke-width="1.1"/>
<path d="M4.5 116.5 h8 v4 l-2.5 3.5" /><path d="M5 119 h5" stroke="#999"/>
<g fill="#5a5a5a" stroke="none"><rect x="4.5" y="131" width="2.3" height="2.3"/><rect x="7.5" y="131" width="2.3" height="2.3"/><rect x="10.5" y="131" width="2.3" height="2.3"/><rect x="4.5" y="134" width="2.3" height="2.3"/><rect x="7.5" y="134" width="2.3" height="2.3"/><rect x="10.5" y="134" width="2.3" height="2.3"/><rect x="4.5" y="137" width="2.3" height="2.3"/><rect x="7.5" y="137" width="2.3" height="2.3"/><rect x="10.5" y="137" width="2.3" height="2.3"/></g>
<rect x="6" y="149" width="5" height="4" stroke="#3050c0" stroke-dasharray="1 .6"/><path d="M8 146.5 l3 3 l-3 2z" fill="#fff"/>
<rect x="4.5" y="161" width="8" height="8"/><path d="M6.5 167 l4-4 m0 0 v2.2 m0 -2.2 h-2.2" stroke="#3050c0"/>
<path d="M5 176 v8 h7 v-3 h-4 v-5z" fill="#ddd"/><path d="M9 181.5 h3" stroke="#3050c0"/>
<path d="M5.5 192 h1.5 M12 197 v2" stroke="#222" stroke-width="1.1"/><path d="M7 192 q4.6 .4 5 5" stroke="#3070e0" stroke-width="1.3"/>
<path d="M5 206.5 q6 0 7 7" stroke="#3070e0" stroke-width="1.3"/><path d="M10.5 206 v3 h2" stroke="#222"/>
<path d="M5 221.5 h6 q2 0 2 2 v4 q0 2 -2 2 h-6" /><path d="M5 221.5 v8" stroke="#aaa"/>
<path d="M5 236.5 h6 q2 0 2 2 v4 q0 2 -2 2 h-6" /><path d="M5 236.5 v8" stroke="#aaa"/>
<path d="M4.5 255 h8" stroke="#3070e0" stroke-dasharray="2.2 1.2" stroke-width="1.2"/><path d="M8.5 253 v4" stroke="#3070e0"/>
<path d="M4.5 266.5 h8 M8.5 266.5 v7" stroke-width="1.2"/><path d="M7 273.5 h3" stroke="#3070e0"/>
<path d="M5.5 281 l6 7 M11.5 281 l-6 7 M8.5 280 v9" stroke="#555" stroke-width=".7"/><circle cx="8.5" cy="284.5" r="1.4" fill="#e0b030" stroke="none"/><circle cx="10.5" cy="282" r="1" fill="#e0b030" stroke="none"/>
<path d="M4.5 299 l4 -1.5 l4 1.5 v3.5 l-4 1.5 l-4 -1.5z" fill="#c8a860" stroke="#8a7040" stroke-width=".4"/><path d="M5.5 297.5 l3 -2 l3 1.5 l-3 2z" fill="#d88048" stroke="none"/>
<rect x="4.5" y="311" width="5.5" height="5.5" fill="#f0e0a0" stroke="#b0a060" stroke-width=".5"/><rect x="7.5" y="314" width="5.5" height="5.5" fill="#a0c8f0" stroke="#6090c0" stroke-width=".5"/>
<path d="M4.5 329 l4 -1.5 l4 1.5 v3 l-4 1.5 l-4 -1.5z" fill="#c8a860" stroke="#8a7040" stroke-width=".4"/><circle cx="8.5" cy="328" r="2" fill="#e8d8a0" stroke="#8a7040" stroke-width=".5"/>
<circle cx="8.5" cy="346" r="2.8" fill="#222" stroke="none"/><path d="M9.5 343 l1.5 -2" stroke="#555"/><circle cx="11.3" cy="340.6" r=".9" fill="#e06020" stroke="none"/>
<!-- col2 -->
<path d="M23.5 57.3 L30.5 63.6"/><circle cx="23.5" cy="57.3" r=".9" fill="#c8a020" stroke="none"/><circle cx="30.5" cy="63.6" r=".9" fill="#c8a020" stroke="none"/>
<path d="M23 71.3 L31 79"/><circle cx="24.6" cy="72.8" r=".9" fill="#c8a020" stroke="none"/><circle cx="28.8" cy="76.9" r=".9" fill="#c8a020" stroke="none"/>
<path d="M24.5 86.2 h4.6 l2.3 3.8 l-2.3 3.8 h-4.6 l-2.3 -3.8z"/>
<rect x="23.3" y="102.5" width="7.4" height="4.6" stroke-width=".9"/><circle cx="23.3" cy="102.5" r=".9" fill="#c8a020" stroke="none"/><circle cx="30.7" cy="107.1" r=".9" fill="#c8a020" stroke="none"/>
<path d="M25 124 q-3 -6 3 -6.5 q4 .5 2 5"/><circle cx="25" cy="124" r=".9" fill="#c8a020" stroke="none"/><circle cx="28" cy="117.5" r=".9" fill="#c8a020" stroke="none"/><circle cx="30" cy="122.5" r=".9" fill="#c8a020" stroke="none"/>
<path d="M23.5 132 q6 1 7 7" stroke-width="1.2"/><circle cx="23.5" cy="132" r=".9" fill="#c8a020" stroke="none"/><circle cx="30.5" cy="139" r=".9" fill="#c8a020" stroke="none"/>
<circle cx="27" cy="150" r="3.7"/><path d="M27 150 l2.5 -2" /><circle cx="27" cy="150" r=".9" fill="#c8a020" stroke="none"/>
<ellipse cx="27" cy="165" rx="4.6" ry="2.6" transform="rotate(-45 27 165)"/><circle cx="27" cy="165" r=".9" fill="#c8a020" stroke="none"/>
<path d="M23 183 q0 -6 5 -6 q3 .5 3 4 M25 183 q.5 -3.5 3 -4" /><circle cx="23" cy="183" r=".9" fill="#c8a020" stroke="none"/><circle cx="31" cy="181" r=".9" fill="#c8a020" stroke="none"/>
<g fill="#a08820" stroke="none"><rect x="23" y="191" width="1.6" height="1.6"/><rect x="29.5" y="191" width="1.6" height="1.6"/><rect x="26.2" y="194.3" width="1.6" height="1.6"/><rect x="23" y="197.5" width="1.6" height="1.6"/><rect x="29.5" y="197.5" width="1.6" height="1.6"/></g>
<path d="M23 213 q2 1 3 -3 t4 -3" stroke-width="1"/><circle cx="23" cy="213" r=".9" fill="#c8a020" stroke="none"/><circle cx="30.5" cy="206.5" r=".9" fill="#c8a020" stroke="none"/>
<rect x="23" y="221" width="8" height="7" fill="#9a9a9a" stroke="#888" stroke-width=".4"/>
<rect x="23" y="236" width="6" height="7" fill="#e4e4e4" stroke="#999" stroke-width=".4"/><text x="23.6" y="241.6" font-family="Liberation Sans" font-size="5" fill="#333" stroke="none">A</text><circle cx="29.5" cy="242.5" r="1.8" fill="#2aa82a" stroke="none"/>
<path d="M23 253 l2 -2 h6 v5 l-2 2 h-6z" fill="#f0d040" stroke="#a08820" stroke-width=".6"/><rect x="23.8" y="253.5" width="5" height="3.6" fill="#f8e890" stroke="#a08820" stroke-width=".4"/>
<rect x="23" y="266" width="8" height="7" fill="#ececec" stroke="#aaa" stroke-width=".5"/><rect x="24.2" y="267.5" width="1.6" height="1.6" fill="#555" stroke="none"/>
<rect x="23" y="282" width="8" height="4.5" fill="#ececec" stroke="#aaa" stroke-width=".5"/><rect x="24.2" y="283.3" width="1.6" height="1.6" fill="#555" stroke="none"/>
</g></svg>
</div>

<!-- RIGHT PANEL -->
<div class="a" id="right" style="left:0;top:0;width:960px;height:513px;pointer-events:none">
<div class="a" style="left:837px;top:47px;width:8px;height:379px;background:#f1f4f4;border-left:.5px solid #dde2e2"></div>
<div class="btn" style="left:837px;top:47px;width:7.6px;height:7.4px"><div class="a" style="left:1.3px;top:1.8px;border:2px solid transparent;border-bottom:2.6px solid #222;border-top:none"></div></div>
<div class="btn" style="left:837px;top:97.5px;width:7.6px;height:12.5px;background:#fafcfc"></div>
<div class="btn" style="left:837px;top:410.5px;width:7.6px;height:7.5px"><div class="a" style="left:1.3px;top:2px;border:2px solid transparent;border-bottom:2.6px solid #222;border-top:none"></div></div>
<div class="btn" style="left:837px;top:418px;width:7.6px;height:7.5px"><div class="a" style="left:1.3px;top:2.2px;border:2px solid transparent;border-top:2.6px solid #222;border-bottom:none"></div></div>
<div class="hatch" style="left:847px;top:180px;width:2.5px;height:240px;opacity:.3"></div>
<div class="hatch" style="left:849.5px;top:50px;width:31px;height:4px"></div><div class="hatch" style="left:913px;top:50px;width:29.5px;height:4px"></div>
<span class="t" style="left:885.6px;top:47.8px;font-size:4.9px;color:#3a3a3a;margin-top:.6px">Properties</span>
<div class="btn" style="left:945px;top:47px;width:6.5px;height:7px"><div class="a" style="left:.8px;top:1.8px;width:2.8px;height:2.8px;border:.7px solid #222"></div><div class="a" style="left:1.8px;top:.6px;width:2.8px;height:2.8px;border:.7px solid #222"></div></div>
<div class="btn" style="left:952.8px;top:47px;width:6.5px;height:7px"><svg class="a" style="left:0;top:0" width="5" height="5.5" viewBox="0 0 5 5.5"><path d="M1 1.2L4 4.4M4 1.2L1 4.4" stroke="#222" stroke-width=".9"/></svg></div>
<div class="cb" style="left:853.3px;top:63px;width:53.3px;height:11px"><span class="t" style="left:2.3px;top:.4px;font-size:6.1px">No Selection</span><i></i></div>
<div class="btn" style="left:909.2px;top:62.5px;width:13.7px;height:12.3px;border-radius:2px"><svg class="a" style="left:0;top:0" width="12" height="11" viewBox="0 0 12 11"><rect x="3" y="2.5" width="4.5" height="5" fill="#f4f4f4" stroke="#555" stroke-width=".5"/><path d="M6 6 l3 2.5 l-1.4 .2 l.7 1.3 l-.8 .3 l-.6 -1.3 l-.9 .8z" fill="#222"/></svg></div>
<div class="btn" style="left:925px;top:62.5px;width:13.7px;height:12.3px;border-radius:2px"><svg class="a" style="left:0;top:0" width="12" height="11" viewBox="0 0 12 11"><rect x="3" y="2.5" width="4.5" height="4.5" fill="#ddd" stroke="#333" stroke-width=".7"/><rect x="5" y="4.5" width="4" height="4" fill="#eee" stroke="#333" stroke-width=".7"/><path d="M7.5 7 l2.5 2.5" stroke="#222" stroke-width=".8"/></svg></div>
<div class="btn" style="left:941px;top:62.5px;width:13.7px;height:12.3px;border-radius:2px"><svg class="a" style="left:0;top:0" width="12" height="11" viewBox="0 0 12 11"><path d="M5 2.5 h3 l-1.5 3 h2 l-3.5 4.5 l1 -3.5 h-2z" fill="#e8b820" stroke="#8a6a10" stroke-width=".4"/><path d="M7.5 7 l2 2.6 l-1.6 -.4z" fill="#222"/></svg></div>
<div class="gb" style="left:853.3px;top:78.2px;width:101.7px;height:350.6px;border-color:#aeb4b4;box-shadow:inset .6px .6px 0 #f6f8f8"></div>
<div class="gb" style="left:859px;top:87px;width:89px;height:73.5px"></div><span class="t" style="left:863px;top:83.0px;font-size:5.8px;background:#e9eeee;padding:0 1px;width:22px">General</span>
<div class="gb" style="left:859px;top:165.5px;width:89px;height:43.5px"></div><span class="t" style="left:863px;top:161.0px;font-size:5.8px;background:#e9eeee;padding:0 1px;width:28px">PrintStyle</span>
<div class="gb" style="left:859px;top:213.7px;width:89px;height:63px"></div><span class="t" style="left:863px;top:209.2px;font-size:5.8px;background:#e9eeee;padding:0 1px;width:14px">View</span>
<div class="gb" style="left:859px;top:281.3px;width:89px;height:53.8px"></div><span class="t" style="left:863px;top:276.8px;font-size:5.8px;background:#e9eeee;padding:0 1px;width:14px">Misc</span>
<div class="in" style="left:879.5px;top:96.6px;width:64px"><span class="t" style="left:2.2px;top:-.2px;font-size:5.9px"></span></div>
<div class="cb" style="left:879.5px;top:106.6px;width:64px;height:9.6px"><span class="t" style="left:2.2px;top:-.2px;font-size:5.9px">0</span><i></i></div>
<div class="cb" style="left:879.5px;top:116.6px;width:64px;height:9.6px"><svg class="a" style="left:3px;top:.3px" width="7" height="7" viewBox="0 0 7 7"><circle cx="3.5" cy="3.5" r="2.3" fill="#fff" stroke="#222" stroke-width=".7"/></svg><span class="t" style="left:11.5px;top:-.2px;font-size:5.9px">ByLayer</span><i></i></div>
<div class="in" style="left:879.5px;top:126.6px;width:64px"><span class="t" style="left:2.2px;top:-.2px;font-size:5.9px">1.00</span></div>
<div class="cb" style="left:879.5px;top:136.6px;width:64px;height:9.6px;overflow:hidden"><span class="t" style="left:2px;top:-.2px;font-size:5.9px">ByLayer</span><span class="t" style="left:31px;top:-.2px;font-size:5.9px;width:24.5px;overflow:hidden">Solid line</span><i style="background:linear-gradient(#f4f7f7,#dde3e3)"></i></div>
<div class="cb" style="left:879.5px;top:146.6px;width:64px;height:9.6px"><div class="a" style="left:3px;top:3.6px;width:15px;height:.8px;background:#222"></div><span class="t" style="left:19.5px;top:-.2px;font-size:5.9px">ByLayer</span><i></i></div>
<div class="cb" style="left:879.5px;top:174.3px;width:64px;height:9.6px"><span class="t" style="left:2.2px;top:-.2px;font-size:5.9px">None</span><i></i></div>
<div class="cb" style="left:879.5px;top:184.6px;width:64px;height:9.6px"><span class="t" style="left:2.2px;top:-.2px;font-size:5.9px">ByColor</span><i></i></div>
<div class="in" style="left:879.5px;top:194.6px;width:64px"><span class="t" style="left:2.2px;top:-.2px;font-size:5.9px">None</span></div>
<div class="in" style="left:879.5px;top:222.6px;width:64px"><span class="t" style="left:2.2px;top:-.2px;font-size:5.9px">1.03</span></div>
<div class="in" style="left:879.5px;top:232.6px;width:64px"><span class="t" style="left:2.2px;top:-.2px;font-size:5.9px">30.30</span></div>
<div class="in" style="left:879.5px;top:242.6px;width:64px"><span class="t" style="left:2.2px;top:-.2px;font-size:5.9px">0.00</span></div>
<div class="in" style="left:879.5px;top:252.6px;width:64px"><span class="t" style="left:2.2px;top:-.2px;font-size:5.9px">18.86</span></div>
<div class="in" style="left:879.5px;top:262.6px;width:64px"><span class="t" style="left:2.2px;top:-.2px;font-size:5.9px">39.81</span></div>
<div class="cb" style="left:879.5px;top:290.3px;width:64px;height:9.6px"><span class="t" style="left:2.2px;top:-.2px;font-size:5.9px">Yes</span><i></i></div>
<div class="cb" style="left:879.5px;top:300.3px;width:64px;height:9.6px"><span class="t" style="left:2.2px;top:-.2px;font-size:5.9px">No</span><i></i></div>
<div class="cb" style="left:879.5px;top:310.3px;width:64px;height:9.6px"><span class="t" style="left:2.2px;top:-.2px;font-size:5.9px">Yes</span><i></i></div>
<div class="in" style="left:879.5px;top:320.3px;width:64px"><span class="t" style="left:2.2px;top:-.2px;font-size:5.9px"></span></div>
<svg class="a" style="left:864.5px;top:0" width="10" height="340" viewBox="864.5 0 10 340">
<circle cx="869" cy="101.5" r="3.3" fill="#3a78d0" stroke="#1a3a80" stroke-width=".5"/><path d="M867 100 q2 -2 3 0 q1 2 -1 3 q-2 0 -2 -3z" fill="#4ab84a"/><rect x="866.5" y="104.5" width="5" height="1.4" fill="#444"/>
<path d="M865 112 l3 -2 l5 1 v2.5 l-3 2 l-5 -1z" fill="#d8c050" stroke="#8a7a20" stroke-width=".4"/>
<circle cx="868" cy="120" r="2" fill="#e8c040" stroke="#555" stroke-width=".5"/><path d="M866 124.5 l2 -3 l2 3z" fill="#3060d0"/><path d="M870 118 l2.5 4" stroke="#d03030" stroke-width="1"/>
<rect x="865.5" y="128" width="7" height="7" fill="#e4e4e4" stroke="#444" stroke-width=".5"/><path d="M866.5 134 v-4 l2.5 2.5 l2.5 -2.5 v4" fill="none" stroke="#222" stroke-width=".8"/>
<rect x="865.5" y="138" width="7" height="7" fill="#d0d0d0" stroke="#444" stroke-width=".5"/><path d="M866 141.5 h2 M869 141.5 h1 M871 141.5 h1.5 M866.5 143.5 v-1.5 l1.2 1.5 l1.2 -1.5 l1.2 1.5 l1.2 -1.5 v1.5" fill="none" stroke="#222" stroke-width=".6"/>
<path d="M865.5 148.5 h7 M865.5 151 h7 M865.5 153.8 h7" stroke="#222" stroke-width="1.4"/>
<rect x="865.5" y="177" width="6" height="6" fill="#f4f4f4" stroke="#777" stroke-width=".5"/><path d="M866.5 182 l5.5 -5.5" stroke="#c8a020" stroke-width="1.2"/><path d="M866 183 l1.5 -1.5" stroke="#222" stroke-width="1"/>
<path d="M866 193 v-6 M868 193 v-7 M870 193 v-5 M872 193 v-6.5" stroke-width="1.3" stroke="#3060d0"/><path d="M867 193 v-5 M871 193 v-4" stroke="#30a030" stroke-width="1"/><path d="M869 193 v-6" stroke="#d03030" stroke-width="1"/>
<rect x="865.5" y="196" width="7" height="7" fill="#333"/><path d="M866.5 202 v-3 M868.3 202 v-4.5" stroke="#3060d0" stroke-width="1"/><path d="M870 202 v-2.5" stroke="#d03030" stroke-width="1"/><path d="M871.6 202 v-4" stroke="#30a030" stroke-width="1"/>
<circle cx="869" cy="227" r="3.2" fill="#f4f4f4" stroke="#333" stroke-width=".8"/><path d="M869 227 h1.6" stroke="#222" stroke-width=".8"/><circle cx="871.5" cy="229.5" r=".9" fill="#222"/>
<circle cx="869" cy="237" r="3.2" fill="#f4f4f4" stroke="#333" stroke-width=".8"/><path d="M869 237 h1.6" stroke="#222" stroke-width=".8"/><circle cx="871.5" cy="239.5" r=".9" fill="#222"/>
<circle cx="869" cy="247" r="3.2" fill="#f4f4f4" stroke="#333" stroke-width=".8"/><path d="M869 247 h1.6" stroke="#222" stroke-width=".8"/><circle cx="871.5" cy="249.5" r=".9" fill="#222"/>
<path d="M866 254 h6 M866 261 h6 M869 254 v7" stroke="#3070e0" stroke-width="1.1"/>
<path d="M865.5 264 v6 M872.5 264 v6 M865.5 267 h7" stroke="#3070e0" stroke-width="1.1"/><path d="M866 267 l2 -1.5 v3z M872 267 l-2 -1.5 v3z" fill="#3070e0"/>
<rect x="865.5" y="291.5" width="7" height="7" fill="#b8c8e0" stroke="#6080b0" stroke-width=".5"/><path d="M867 297 v-3 h3 M868.5 295.5 l2.5 -2.5" fill="none" stroke="#222" stroke-width=".7"/>
<path d="M867 302 v4.5 l-1.5 1.8 M867 306.5 h4.5" fill="none" stroke="#222" stroke-width=".9"/><circle cx="867" cy="306.5" r=".9" fill="#222"/><circle cx="867" cy="302" r=".8" fill="#222"/><circle cx="871.5" cy="306.5" r=".8" fill="#222"/>
<path d="M867 312 v4.5 l-1.5 1.8 M867 316.5 h5" fill="none" stroke="#222" stroke-width=".9"/><circle cx="867" cy="316.5" r=".9" fill="#222"/><path d="M871 315.3 l1.6 1.2 l-1.6 1.2z" fill="#222"/>
<rect x="865.5" y="321.5" width="7" height="7" fill="#e8e0d0" stroke="#999" stroke-width=".4"/><path d="M866 326 l3 -2 l3.5 1 v2 l-3 1.5 l-3.5 -1z" fill="#d8a060" stroke="#8a6030" stroke-width=".4"/>
</svg>
</div>
<!-- BOTTOM -->
<div class="a" id="bottom" style="left:0;top:0;width:960px;height:513px;pointer-events:none">
<div class="a" style="left:36px;top:426px;width:801px;height:9px;background:#eef2f2"></div>
<div class="a" style="left:576px;top:426.5px;width:261px;height:8px;background:#f2f5f5"></div>
<svg class="a" style="left:36px;top:426px" width="110" height="10" viewBox="36 426 110 10">
<path d="M37 426.5 q1.5 .5 2 4 q.5 3.5 3 3.8 h17 q2.5 -.3 3.5 -4 q.8 -3.3 2.5 -3.8z" fill="#f8fafa" stroke="#555" stroke-width=".7"/>
<path d="M65.5 426.8 q1.2 .5 1.8 3.7 q.5 3.5 3 3.8 h20 q2.5 -.3 3.5 -4 q.8 -3 2 -3.5" fill="#e9eeee" stroke="#555" stroke-width=".7"/>
<path d="M98.5 426.8 q1.2 .5 1.8 3.7 q.5 3.5 3 3.8 h22 q2.5 -.3 3.5 -4 q.8 -3 2 -3.5" fill="#e9eeee" stroke="#555" stroke-width=".7"/>
</svg>
<span class="t" style="left:41.5px;top:426.3px;font-size:5.8px;letter-spacing:.25px">Model</span>
<span class="t" style="left:71px;top:426px;font-size:5.8px">Layout1</span>
<span class="t" style="left:104px;top:426px;font-size:5.8px">Layout2</span>
<div class="btn" style="left:576px;top:426.5px;width:6.5px;height:7.5px"><div class="a" style="left:1.0499999999999998px;top:1.15px;border:2px solid transparent;border-right:2.6px solid #222;border-left:none"></div></div>
<div class="btn" style="left:798.5px;top:426.5px;width:13px;height:7.5px;background:#f8fafa"></div>
<div class="btn" style="left:821.5px;top:426.5px;width:7px;height:7.5px"><div class="a" style="left:1.2999999999999998px;top:1.15px;border:2px solid transparent;border-right:2.6px solid #222;border-left:none"></div></div>
<div class="btn" style="left:829px;top:426.5px;width:7px;height:7.5px"><div class="a" style="left:2.1px;top:1.15px;border:2px solid transparent;border-left:2.6px solid #222;border-right:none"></div></div>
<div class="hatch" style="left:37px;top:440px;width:430px;height:4px"></div><div class="hatch" style="left:512px;top:440px;width:428px;height:4px"></div>
<span class="t" style="left:470.5px;top:438px;font-size:4.6px">Command window</span>
<div class="btn" style="left:944px;top:438px;width:6.5px;height:7px"><div class="a" style="left:.8px;top:1.8px;width:2.8px;height:2.8px;border:.7px solid #222"></div><div class="a" style="left:1.8px;top:.6px;width:2.8px;height:2.8px;border:.7px solid #222"></div></div>
<div class="btn" style="left:951px;top:438px;width:6.5px;height:7px"><svg class="a" style="left:0;top:0" width="5" height="5.5" viewBox="0 0 5 5.5"><path d="M1 1.2L4 4.4M4 1.2L1 4.4" stroke="#222" stroke-width=".9"/></svg></div>
<div class="a" style="left:36px;top:447.5px;width:922.5px;height:38.5px;background:#fff;border:1px solid #9aa0a0;border-radius:1.5px"></div>
<span class="t" style="left:39px;top:448px;font-size:5.6px;color:#666">:</span>
<span class="t" style="left:39px;top:454px;font-size:5.7px;color:#111">Specify opposite corner:</span>
<span class="t" style="left:39px;top:462px;font-size:5.6px;color:#666">:</span>
<span class="t" style="left:39px;top:469px;font-size:5.6px;color:#666">:</span>
<div class="a" style="left:949.5px;top:448.5px;width:8px;height:36.5px;background:#f0f3f3"></div>
<div class="btn" style="left:950px;top:449px;width:7px;height:6.5px"><div class="a" style="left:0.8999999999999999px;top:1.0499999999999998px;border:2px solid transparent;border-bottom:2.6px solid #222;border-top:none"></div></div>
<div class="btn" style="left:950px;top:455.5px;width:7px;height:13px;background:#f6f8f8"></div>
<div class="btn" style="left:950px;top:469px;width:7px;height:6.5px"><div class="a" style="left:0.8999999999999999px;top:1.0499999999999998px;border:2px solid transparent;border-bottom:2.6px solid #222;border-top:none"></div></div>
<div class="btn" style="left:950px;top:476px;width:7px;height:7px"><div class="a" style="left:0.8999999999999999px;top:1.9px;border:2px solid transparent;border-top:2.6px solid #222;border-bottom:none"></div></div>
<div class="a" style="left:36px;top:487px;width:922.5px;height:7px;background:#fff;border-left:1px solid #c4caca"></div>
<span class="t" style="left:39px;top:486px;font-size:5.6px;color:#666">:</span>
<div class="a" style="left:0;top:494px;width:960px;height:14.5px;background:#e9eeee;border-top:1px solid #bfc5c5"></div>
<div class="a" style="left:1px;top:495px;width:384px;height:13px;border:1px solid #cfd5d5;border-radius:2px"></div>
<div class="a" style="left:387.5px;top:494px;width:63.5px;height:15px;border:1px solid #c4caca;border-radius:2px"></div>
<div class="a" style="left:454.8px;top:494px;width:120px;height:15px;border:1px solid #c4caca;border-radius:2px"></div>
<div class="a" style="left:390px;top:495.3px;width:17.30000000000001px;height:12px;border:1px solid #b4baba;border-radius:1.5px;background:linear-gradient(#fafcfc,#e8ecec);text-align:center;font-size:5.6px;line-height:10px;color:#222">Snap</div>
<div class="a" style="left:409px;top:495.3px;width:17px;height:12px;border:1px solid #b4baba;border-radius:1.5px;background:linear-gradient(#fafcfc,#e8ecec);text-align:center;font-size:5.6px;line-height:10px;color:#222">Grid</div>
<div class="a" style="left:427.7px;top:495.3px;width:21.600000000000023px;height:12px;border:1px solid #b4baba;border-radius:1.5px;background:linear-gradient(#d0d6d6,#d8dddd);text-align:center;font-size:5.6px;line-height:10px;color:#222">Ortho</div>
<div class="a" style="left:456.7px;top:495.3px;width:20.600000000000023px;height:12px;border:1px solid #b4baba;border-radius:1.5px;background:linear-gradient(#fafcfc,#e8ecec);text-align:center;font-size:5.6px;line-height:10px;color:#222">Polar</div>
<div class="a" style="left:479px;top:495.3px;width:20.5px;height:12px;border:1px solid #b4baba;border-radius:1.5px;background:linear-gradient(#d0d6d6,#d8dddd);text-align:center;font-size:5.6px;line-height:10px;color:#222">ESnap</div>
<div class="a" style="left:501.5px;top:495.3px;width:21.799999999999955px;height:12px;border:1px solid #b4baba;border-radius:1.5px;background:linear-gradient(#d0d6d6,#d8dddd);text-align:center;font-size:5.6px;line-height:10px;color:#222">ETrack</div>
<div class="a" style="left:525.5px;top:495.3px;width:18.5px;height:12px;border:1px solid #b4baba;border-radius:1.5px;background:linear-gradient(#fafcfc,#e8ecec);text-align:center;font-size:5.6px;line-height:10px;color:#222">LWT</div>
<div class="a" style="left:546px;top:495.3px;width:25px;height:12px;border:1px solid #b4baba;border-radius:1.5px;background:linear-gradient(#d0d6d6,#d8dddd);text-align:center;font-size:5.6px;line-height:10px;color:#222">MODEL</div>
<span class="t" style="left:577.5px;top:497px;font-size:5.6px">(0.76,23.79,0.00)</span>
<div class="a" style="left:0;top:508px;width:960px;height:5px;background:linear-gradient(#c4c8c8 0,#b0b4b4 1.2px,#a0a4a4)"></div>
<div class="a" style="left:1px;top:510px;width:17px;height:3px;background:#3a78d8;border-radius:2px 2px 0 0"></div>
<div class="a" style="left:22px;top:510.5px;width:60px;height:2.5px;background:#b8c4d4;opacity:.7"></div>
<div class="a" style="left:78px;top:510.5px;width:120px;height:2.5px;background:#9aa0a4;opacity:.6"></div>
</div>
</div></body></html>
